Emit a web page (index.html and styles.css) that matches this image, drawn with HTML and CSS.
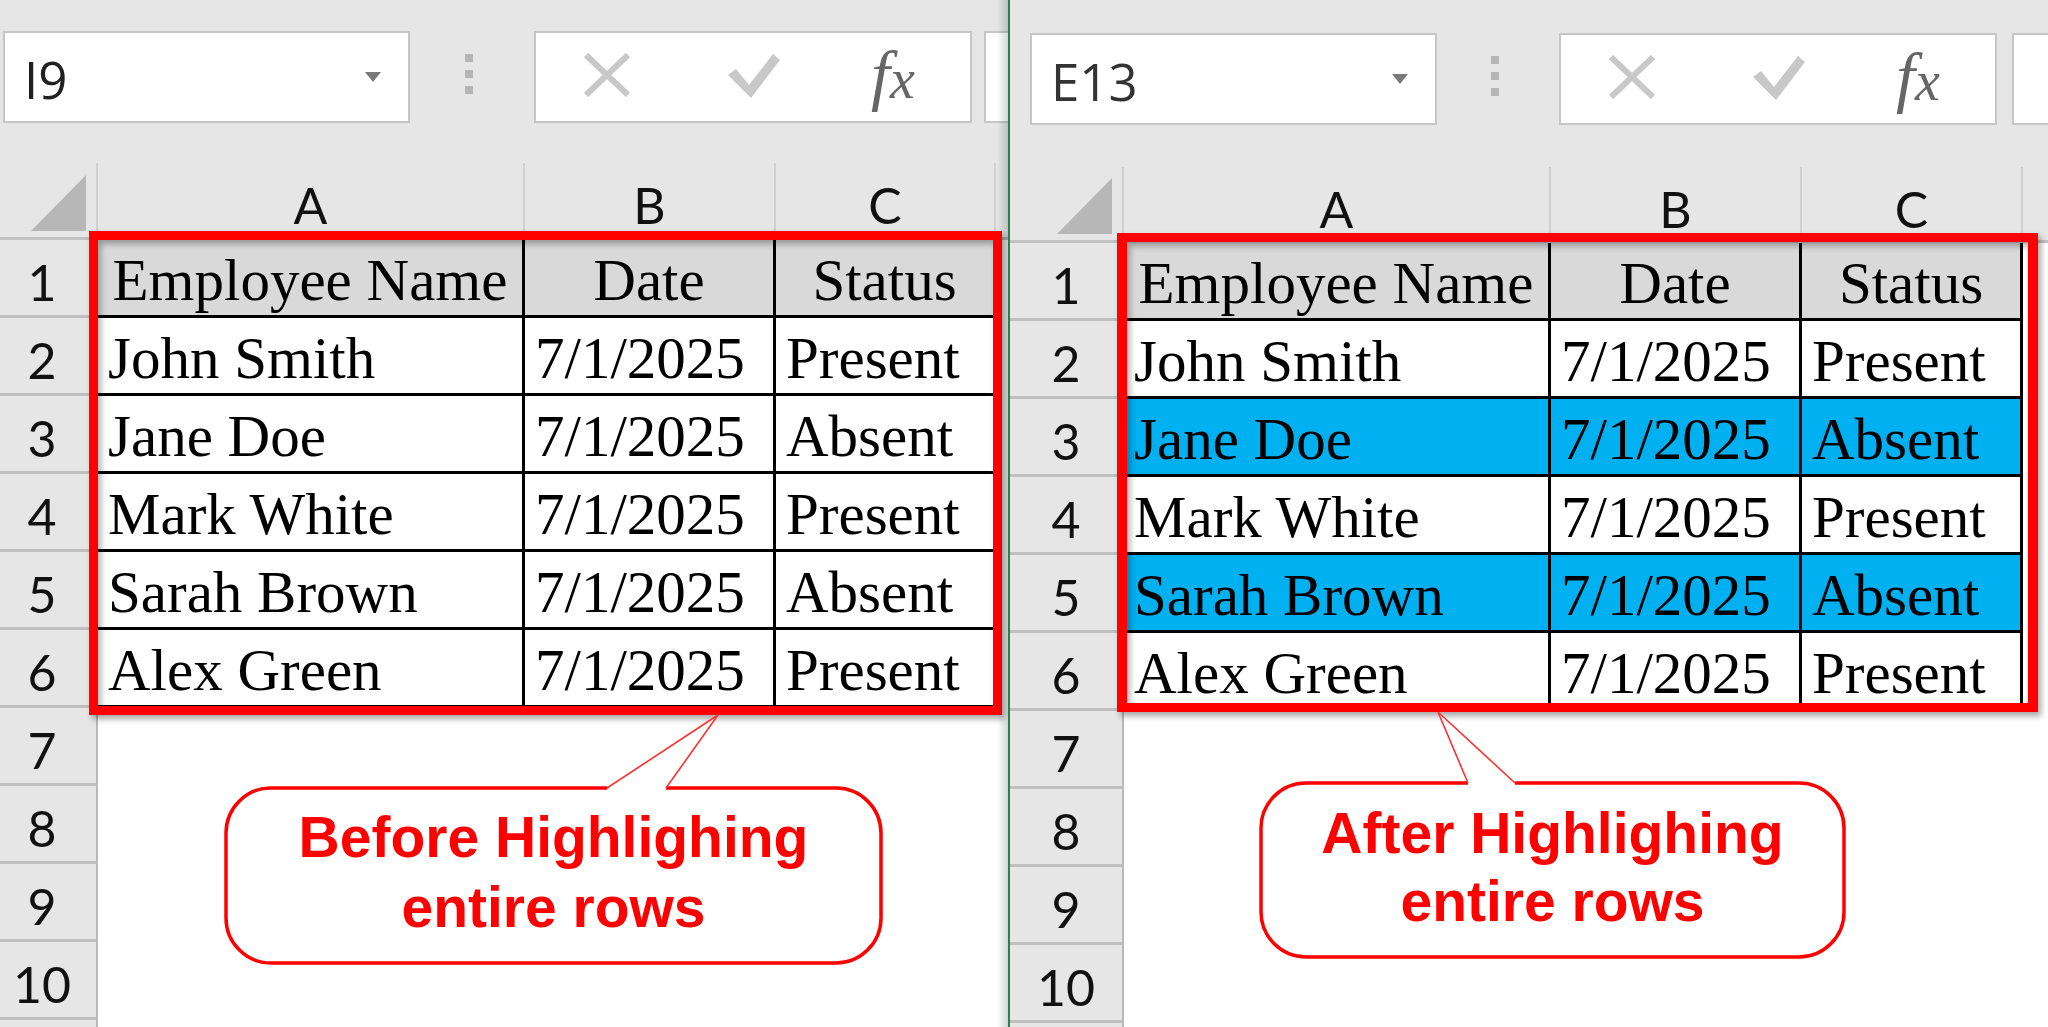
FILE: index.html
```html
<!DOCTYPE html>
<html>
<head>
<meta charset="utf-8">
<title>Before and after highlighting entire rows</title>
<link rel="stylesheet" href="styles.css">
</head>
<body>
<div class="panel left">
  <div class="toolbar">
    <div class="tb-row">
      <div class="namebox"><span class="ref">I9</span><span class="drop"></span></div>
      <div class="dots"><i></i><i></i><i></i></div>
      <div class="fbox">
        <svg class="ico-x" width="48" height="44" viewBox="0 0 48 44"><path d="M3 2 L45 42 M45 2 L3 42" stroke="#c8c8c8" stroke-width="6" fill="none"/></svg>
        <svg class="ico-ok" width="54" height="47" viewBox="0 0 54 47"><polygon points="1,22 9,16 22,32 46,1 53,7 24,45" fill="#c8c8c8"/></svg>
        <span class="fx">f<span class="fxx">x</span></span>
      </div>
      <div class="fbox2"></div>
    </div>
  </div>
  <div class="sheet">
    <div class="corner"><span class="tri"></span></div><div class="ch">A</div><div class="ch">B</div><div class="ch">C</div><div class="ch last"></div>
    <div class="rh">1</div><div class="tc th">Employee Name</div><div class="tc th">Date</div><div class="tc th">Status</div><div class="blank"></div>
    <div class="rh">2</div><div class="tc">John Smith</div><div class="tc">7/1/2025</div><div class="tc">Present</div><div class="blank"></div>
    <div class="rh">3</div><div class="tc">Jane Doe</div><div class="tc">7/1/2025</div><div class="tc">Absent</div><div class="blank"></div>
    <div class="rh">4</div><div class="tc">Mark White</div><div class="tc">7/1/2025</div><div class="tc">Present</div><div class="blank"></div>
    <div class="rh">5</div><div class="tc">Sarah Brown</div><div class="tc">7/1/2025</div><div class="tc">Absent</div><div class="blank"></div>
    <div class="rh">6</div><div class="tc">Alex Green</div><div class="tc">7/1/2025</div><div class="tc">Present</div><div class="blank"></div>
    <div class="rh">7</div><div class="blank"></div><div class="blank"></div><div class="blank"></div><div class="blank"></div>
    <div class="rh">8</div><div class="blank"></div><div class="blank"></div><div class="blank"></div><div class="blank"></div>
    <div class="rh">9</div><div class="blank"></div><div class="blank"></div><div class="blank"></div><div class="blank"></div>
    <div class="rh">10</div><div class="blank"></div><div class="blank"></div><div class="blank"></div><div class="blank"></div>
    <div class="rh"></div><div class="blank"></div><div class="blank"></div><div class="blank"></div><div class="blank"></div>
  </div>
  <div class="redbox"></div>
  <div class="callout">
    <svg class="bubble" width="659" height="254" viewBox="0 0 659 254">
      <path d="M47 76 H383 L494 3 L442 76 H612 A45 45 0 0 1 657 121 V206 A45 45 0 0 1 612 251 H47 A45 45 0 0 1 2 206 V121 A45 45 0 0 1 47 76 Z" fill="#fff"/>
      <path d="M442 76 H612 A45 45 0 0 1 657 121 V206 A45 45 0 0 1 612 251 H47 A45 45 0 0 1 2 206 V121 A45 45 0 0 1 47 76 H383" fill="none" stroke="#ff0000" stroke-width="3.5"/>
      <path d="M383 76 L494 3 L442 76" fill="none" stroke="#ff3030" stroke-width="1.6"/>
    </svg>
    <div class="callout-text">Before Highlighing<br>entire rows</div>
  </div>
</div>
<div class="divider"></div>
<div class="panel right">
  <div class="toolbar">
    <div class="tb-row">
      <div class="namebox"><span class="ref">E13</span><span class="drop"></span></div>
      <div class="dots"><i></i><i></i><i></i></div>
      <div class="fbox">
        <svg class="ico-x" width="48" height="44" viewBox="0 0 48 44"><path d="M3 2 L45 42 M45 2 L3 42" stroke="#c8c8c8" stroke-width="6" fill="none"/></svg>
        <svg class="ico-ok" width="54" height="47" viewBox="0 0 54 47"><polygon points="1,22 9,16 22,32 46,1 53,7 24,45" fill="#c8c8c8"/></svg>
        <span class="fx">f<span class="fxx">x</span></span>
      </div>
      <div class="fbox2"></div>
    </div>
  </div>
  <div class="sheet">
    <div class="corner"><span class="tri"></span></div><div class="ch">A</div><div class="ch">B</div><div class="ch">C</div><div class="ch last"></div>
    <div class="rh">1</div><div class="tc th">Employee Name</div><div class="tc th">Date</div><div class="tc th">Status</div><div class="blank"></div>
    <div class="rh">2</div><div class="tc">John Smith</div><div class="tc">7/1/2025</div><div class="tc">Present</div><div class="blank"></div>
    <div class="rh">3</div><div class="tc hl">Jane Doe</div><div class="tc hl">7/1/2025</div><div class="tc hl">Absent</div><div class="blank"></div>
    <div class="rh">4</div><div class="tc">Mark White</div><div class="tc">7/1/2025</div><div class="tc">Present</div><div class="blank"></div>
    <div class="rh">5</div><div class="tc hl">Sarah Brown</div><div class="tc hl">7/1/2025</div><div class="tc hl">Absent</div><div class="blank"></div>
    <div class="rh">6</div><div class="tc">Alex Green</div><div class="tc">7/1/2025</div><div class="tc">Present</div><div class="blank"></div>
    <div class="rh">7</div><div class="blank"></div><div class="blank"></div><div class="blank"></div><div class="blank"></div>
    <div class="rh">8</div><div class="blank"></div><div class="blank"></div><div class="blank"></div><div class="blank"></div>
    <div class="rh">9</div><div class="blank"></div><div class="blank"></div><div class="blank"></div><div class="blank"></div>
    <div class="rh">10</div><div class="blank"></div><div class="blank"></div><div class="blank"></div><div class="blank"></div>
    <div class="rh"></div><div class="blank"></div><div class="blank"></div><div class="blank"></div><div class="blank"></div>
  </div>
  <div class="redbox"></div>
  <div class="callout">
    <svg class="bubble" width="587" height="251" viewBox="0 0 587 251">
      <path d="M47 74 H209 L179 3 L256 74 H540 A45 45 0 0 1 585 119 V203 A45 45 0 0 1 540 248 H47 A45 45 0 0 1 2 203 V119 A45 45 0 0 1 47 74 Z" fill="#fff"/>
      <path d="M256 74 H540 A45 45 0 0 1 585 119 V203 A45 45 0 0 1 540 248 H47 A45 45 0 0 1 2 203 V119 A45 45 0 0 1 47 74 H209" fill="none" stroke="#ff0000" stroke-width="3.5"/>
      <path d="M209 74 L179 3 L256 74" fill="none" stroke="#ff3030" stroke-width="1.6"/>
    </svg>
    <div class="callout-text">After Highlighing<br>entire rows</div>
  </div>
</div>
</body>
</html>
```

FILE: styles.css
```css
html, body {
  margin: 0;
  padding: 0;
}
body {
  width: 2048px;
  height: 1027px;
  overflow: hidden;
  display: flex;
  background: #e6e6e6;
  font-family: "Open Sans", "Liberation Sans", sans-serif;
}
.panel {
  position: relative;
  height: 1027px;
  overflow: hidden;
  display: flex;
  flex-direction: column;
  background: #e6e6e6;
}
.panel.left { width: 1008px; }
.panel.right { width: 1038px; }
.panel.left::after {
  content: "";
  position: absolute;
  top: 0;
  right: 0;
  width: 11px;
  height: 100%;
  background: linear-gradient(to right, rgba(0,0,0,0), rgba(0,0,0,0.16));
}
.divider {
  width: 2px;
  height: 1027px;
  background: #2f7d4f;
  flex: none;
}

/* toolbar */
.toolbar {
  flex: none;
  box-sizing: border-box;
}
.left .toolbar { height: 163px; padding-top: 31px; }
.right .toolbar { height: 167px; padding-top: 33px; }
.tb-row {
  display: flex;
  align-items: center;
  height: 92px;
}
.namebox {
  box-sizing: border-box;
  width: 407px;
  height: 92px;
  border: 2px solid #c6c6c6;
  background: #fff;
  display: flex;
  align-items: center;
  justify-content: space-between;
  padding: 0 27px 0 19px;
  flex: none;
}
.left .namebox { margin-left: 3px; }
.right .namebox { margin-left: 20px; }
.ref {
  font-family: "Open Sans", "Liberation Sans", sans-serif;
  font-size: 51px;
  color: #202020;
  line-height: 1;
  margin-top: 4px;
}
.right .ref { color: #333; }
.drop {
  width: 0;
  height: 0;
  border-left: 8px solid transparent;
  border-right: 8px solid transparent;
  border-top: 10px solid #7a7a7a;
}
.dots {
  display: flex;
  flex-direction: column;
  gap: 8px;
  flex: none;
  margin-top: -6px;
}
.left .dots { margin-left: 55px; }
.right .dots { margin-left: 54px; }
.dots i {
  display: block;
  width: 8px;
  height: 8px;
  background: #b5b5b5;
}
.fbox {
  box-sizing: border-box;
  width: 438px;
  height: 92px;
  border: 2px solid #c6c6c6;
  background: #fff;
  display: flex;
  align-items: center;
  flex: none;
}
.left .fbox { margin-left: 61px; }
.right .fbox { margin-left: 60px; }
.ico-x { margin-left: 47px; margin-top: -4px; flex: none; }
.ico-ok { flex: none; margin-top: -2px; margin-left: 96px; }
.fx {
  font-family: "Liberation Serif", serif;
  font-style: italic;
  font-size: 68px;
  color: #666;
  line-height: 1;
  margin-top: -4px;
  margin-left: 90px;
}
.fxx { font-size: 56px; }
.fbox2 {
  box-sizing: border-box;
  height: 92px;
  width: 200px;
  border: 2px solid #c6c6c6;
  background: #fff;
  flex: none;
}
.left .fbox2 { margin-left: 12px; }
.right .fbox2 { margin-left: 15px; }

/* sheet grid */
.sheet {
  flex: 1;
  display: grid;
  background: #fff;
}
.left .sheet {
  grid-template-columns: 98px 427px 251px 220px 1fr;
  grid-template-rows: 77px repeat(10, 78px) 1fr;
}
.right .sheet {
  grid-template-columns: 114px 427px 251px 221px 1fr;
  grid-template-rows: 76px repeat(10, 78px) 1fr;
}
.corner, .ch {
  box-sizing: border-box;
  background: #e6e6e6;
  border-bottom: 3px solid #c2c2c2;
  border-right: 2px solid #d0d0d0;
}
.corner {
  position: relative;
  display: flex;
  justify-content: flex-end;
  align-items: flex-end;
  padding: 0 10px 6px 0;
}
.tri {
  display: block;
  width: 0;
  height: 0;
  border-left: 55px solid transparent;
  border-bottom: 56px solid #b7b7b7;
}
.ch {
  font-family: Lato, "Open Sans", sans-serif;
  font-size: 50px;
  color: #111;
  text-align: center;
  padding-top: 10px;
  line-height: 64px;
}
.ch.last { border-right: none; }
.rh {
  box-sizing: border-box;
  background: #e6e6e6;
  border-bottom: 3px solid #bfbfbf;
  border-right: 2px solid #b9b9b9;
  font-family: Lato, "Open Sans", sans-serif;
  font-size: 50px;
  color: #111;
  text-align: center;
  padding-top: 10px;
  line-height: 64px;
  overflow: hidden;
}
.left .rh { padding-right: 12px; }
.blank { background: #fff; }
.tc {
  box-sizing: border-box;
  background: #fff;
  border-right: 3px solid #000;
  border-bottom: 3px solid #000;
  font-family: "Liberation Serif", "Times New Roman", serif;
  font-size: 59px;
  color: #000;
  white-space: nowrap;
  overflow: hidden;
  padding: 7px 0 0 10px;
  line-height: 66px;
}
.tc.th {
  background: #d9d9d9;
  text-align: center;
  padding-left: 0;
}
.tc.hl { background: #00b0f0; }

/* overlays */
.redbox {
  position: absolute;
  box-sizing: border-box;
  border: 9px solid #ff0000;
  box-shadow: 3px 4px 6px rgba(0,0,0,0.35), inset 3px 4px 6px rgba(0,0,0,0.3);
}
.left .redbox { left: 89px; top: 231px; width: 913px; height: 484px; }
.right .redbox { left: 107px; top: 233px; width: 921px; height: 479px; border-width: 9px 10px 9px 10px; }
.callout {
  position: absolute;
}
.left .callout { left: 224px; top: 712px; width: 659px; height: 254px; }
.right .callout { left: 249px; top: 709px; width: 587px; height: 251px; }
.bubble {
  position: absolute;
  left: 0;
  top: 0;
}
.callout-text {
  position: relative;
  font-family: "Liberation Sans", Arial, sans-serif;
  font-weight: bold;
  font-size: 57px;
  color: #ff0000;
  text-align: center;
  white-space: nowrap;
  padding-top: 90px;
}
.left .callout-text { line-height: 70px; }
.right .callout-text { line-height: 68px; }
```
